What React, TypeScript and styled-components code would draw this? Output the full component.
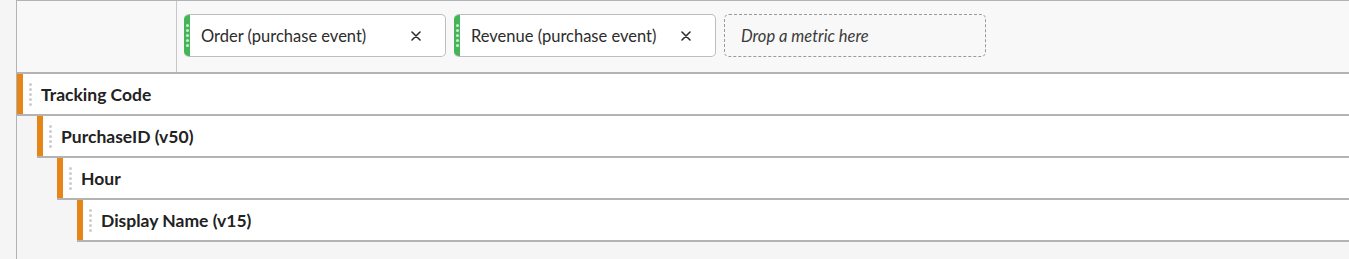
import styled, { createGlobalStyle } from 'styled-components';

const GlobalStyle = createGlobalStyle`
  html, body {
    margin: 0;
    padding: 0;
    background: #f5f5f5;
    font-family: Lato, "Noto Sans", sans-serif;
    color: #2c2c2c;
  }
`;

const Page = styled.div`
  padding-left: 16px;
  height: 259px;
  box-sizing: border-box;
`;

const Panel = styled.div`
  border-left: 1px solid #b3b3b3;
  border-top: 1px solid #b3b3b3;
  height: 100%;
  box-sizing: border-box;
`;

const Header = styled.div`
  display: grid;
  grid-template-columns: 160px 1fr;
  height: 71px;
  background: #f8f8f8;
  border-bottom: 2px solid #b3b3b3;
`;

const CornerCell = styled.div`
  border-right: 1px solid #c8c8c8;
`;

const ChipArea = styled.div`
  display: flex;
  align-items: flex-start;
  gap: 8px;
  padding: 13px 0 0 7px;
`;

const Chip = styled.div`
  display: flex;
  align-items: center;
  width: 262px;
  height: 43px;
  box-sizing: border-box;
  background: #fff;
  border: 1px solid #bdbdbd;
  border-left: none;
  border-radius: 5px;
  overflow: hidden;
`;

const ChipGrip = styled.div`
  width: 6px;
  align-self: stretch;
  background: #44b556;
  display: flex;
  flex-direction: column;
  align-items: center;
  justify-content: center;
  gap: 2px;
`;

const Dot = styled.span<{ $color: string; $size: number }>`
  width: ${(p) => p.$size}px;
  height: ${(p) => p.$size}px;
  border-radius: 50%;
  background: ${(p) => p.$color};
`;

const ChipLabel = styled.span`
  flex: 1;
  padding-left: 11px;
  font-size: 16.5px;
  white-space: nowrap;
`;

const RemoveButton = styled.button`
  border: none;
  background: transparent;
  padding: 0;
  margin-right: 23px;
  width: 12px;
  height: 12px;
  display: flex;
  align-items: center;
  justify-content: center;
  cursor: pointer;
`;

const DropZone = styled.div`
  display: flex;
  align-items: center;
  width: 262px;
  height: 43px;
  box-sizing: border-box;
  border: 1px dashed #9a9a9a;
  border-radius: 5px;
  padding-left: 16px;
  font-size: 16.5px;
  font-style: italic;
  color: #3a3a3a;
`;

const Row = styled.div<{ $level: number }>`
  display: flex;
  align-items: center;
  height: 40px;
  margin-left: ${(p) => p.$level * 20}px;
  background: #fff;
  border-bottom: 2px solid #b3b3b3;
`;

const RowBar = styled.div`
  width: 6px;
  align-self: stretch;
  background: #e68619;
`;

const RowGrip = styled.div`
  display: flex;
  flex-direction: column;
  gap: 2px;
  margin: 0 9px 0 6px;
`;

const RowLabel = styled.span`
  font-size: 17.5px;
  font-weight: 700;
  color: #222;
`;

const Grip = ({ color, count, size }: { color: string; count: number; size: number }) => (
  <>
    {Array.from({ length: count }).map((_, i) => (
      <Dot key={i} $color={color} $size={size} />
    ))}
  </>
);

const CloseIcon = () => (
  <svg width="10" height="10" viewBox="0 0 10 10">
    <path d="M1 1 L9 9 M9 1 L1 9" stroke="#2c2c2c" strokeWidth="1.6" strokeLinecap="round" />
  </svg>
);

const metrics = ['Order (purchase event)', 'Revenue (purchase event)'];
const dimensions = ['Tracking Code', 'PurchaseID (v50)', 'Hour', 'Display Name (v15)'];

export default function App() {
  return (
    <>
      <GlobalStyle />
      <Page>
        <Panel>
          <Header>
            <CornerCell />
            <ChipArea>
              {metrics.map((m) => (
                <Chip key={m}>
                  <ChipGrip>
                    <Grip color="#c8ecce" count={5} size={3} />
                  </ChipGrip>
                  <ChipLabel>{m}</ChipLabel>
                  <RemoveButton aria-label="Remove">
                    <CloseIcon />
                  </RemoveButton>
                </Chip>
              ))}
              <DropZone>Drop a metric here</DropZone>
            </ChipArea>
          </Header>
          {dimensions.map((d, i) => (
            <Row key={d} $level={i}>
              <RowBar />
              <RowGrip>
                <Grip color="#cccccc" count={5} size={3} />
              </RowGrip>
              <RowLabel>{d}</RowLabel>
            </Row>
          ))}
        </Panel>
      </Page>
    </>
  );
}
